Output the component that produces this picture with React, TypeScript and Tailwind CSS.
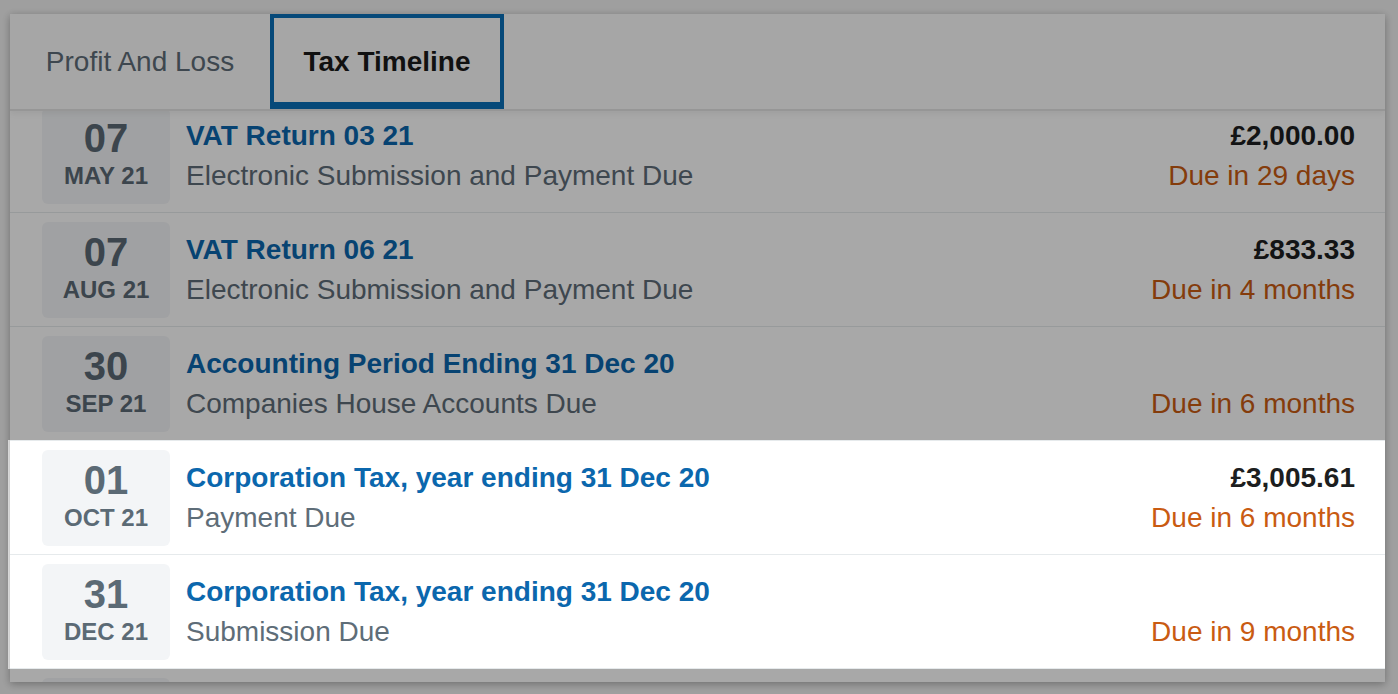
const rows = [
  { day: "07", month: "MAY 21", title: "VAT Return 03 21", sub: "Electronic Submission and Payment Due", amount: "£2,000.00", due: "Due in 29 days" },
  { day: "07", month: "AUG 21", title: "VAT Return 06 21", sub: "Electronic Submission and Payment Due", amount: "£833.33", due: "Due in 4 months" },
  { day: "30", month: "SEP 21", title: "Accounting Period Ending 31 Dec 20", sub: "Companies House Accounts Due", amount: "", due: "Due in 6 months" },
  { day: "01", month: "OCT 21", title: "Corporation Tax, year ending 31 Dec 20", sub: "Payment Due", amount: "£3,005.61", due: "Due in 6 months" },
  { day: "31", month: "DEC 21", title: "Corporation Tax, year ending 31 Dec 20", sub: "Submission Due", amount: "", due: "Due in 9 months" },
];

type Row = (typeof rows)[number];

function TimelineRow({ day, month, title, sub, amount, due }: Row) {
  return (
    <div className="flex items-center gap-4 pl-8 pr-[30px] pt-[9px] pb-2 border-b border-[#e6eaec]">
      <div className="w-32 h-24 shrink-0 rounded-md bg-[#f3f5f7] flex flex-col items-center justify-center pb-1 text-[#5b6a75] font-bold">
        <span className="text-[40px] leading-[40px] mb-1">{day}</span>
        <span className="text-[24px] leading-[28px]">{month}</span>
      </div>
      <div className="flex-1 min-w-0 flex flex-col">
        <span className="h-10 text-[28px] leading-10 font-bold text-[#0b67ad] whitespace-nowrap">{title}</span>
        <span className="h-10 text-[28px] leading-10 text-[#5e6d78] whitespace-nowrap">{sub}</span>
      </div>
      <div className="flex flex-col items-end">
        <span className="h-10 text-[28px] leading-10 font-bold text-[#1c1e20]">{amount}</span>
        <span className="h-10 text-[28px] leading-10 text-[#c95b12] whitespace-nowrap">{due}</span>
      </div>
    </div>
  );
}

export default function App() {
  return (
    <div className="relative h-[694px] overflow-hidden bg-[#f2f2f2] pt-[14px] pl-[10px] font-['Liberation_Sans',Arial,sans-serif]">
      <div className="w-[1375px] h-[668px] bg-white shadow-[0_2px_8px_rgba(0,0,0,0.3)] flex flex-col overflow-hidden">
        {/* Tabs */}
        <div className="relative z-10 h-[97px] shrink-0 flex bg-[#fcfcfc] border-b-2 border-[#e4e4e4] shadow-[0_3px_6px_rgba(0,0,0,0.06)]">
          <button className="w-[260px] h-[95px] border-4 border-transparent text-[28px] text-[#5f6d78]">
            Profit And Loss
          </button>
          <button className="w-[234px] h-[95px] border-4 border-b-[7px] border-[#0a6fb8] text-[28px] font-bold text-[#1a1a1a] pt-[3px]">
            Tax Timeline
          </button>
        </div>

        {/* Timeline list, scrolled a little */}
        <div className="flex-1 overflow-hidden">
          <div className="-mt-3">
            {rows.map((r, i) => (
              <TimelineRow key={i} {...r} />
            ))}
            {/* next row, only its date box top shows */}
            <div className="pl-8 pt-[9px]">
              <div className="w-32 h-24 rounded-md bg-[#f3f5f7]" />
            </div>
          </div>
        </div>
      </div>

      {/* Tour highlight over the two corporation tax rows */}
      <div className="absolute z-50 left-2 top-[440px] w-[1377px] h-[229px] pointer-events-none shadow-[0_0_0_3000px_rgba(0,0,0,0.34)]" />
    </div>
  );
}
